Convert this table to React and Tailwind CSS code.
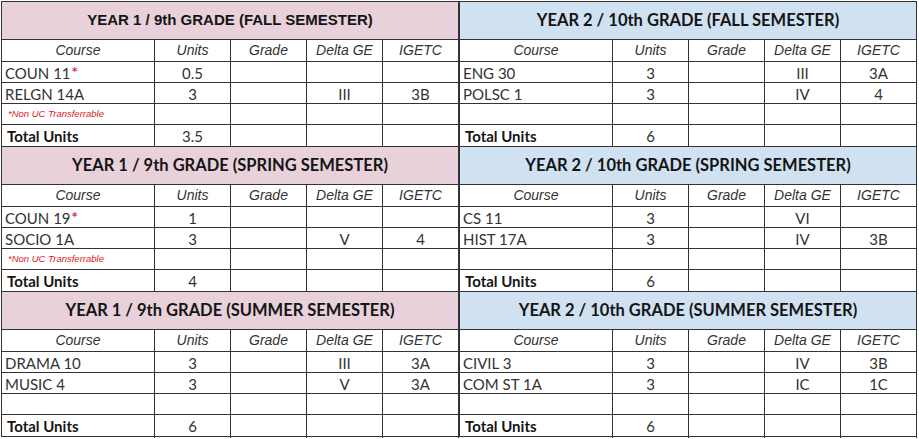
import React from 'react';

const cols = 'grid grid-cols-[153px_76px_76px_76px_76px]';

const sections = [
  [
    {
      title: 'YEAR 1 / 9th GRADE (FALL SEMESTER)',
      arial: true,
      tone: 'pink',
      rows: [
        ['COUN 11', '0.5', '', '', '', true],
        ['RELGN 14A', '3', '', 'III', '3B'],
      ],
      note: true,
      total: '3.5',
    },
    {
      title: 'YEAR 2 / 10th GRADE (FALL SEMESTER)',
      tone: 'blue',
      rows: [
        ['ENG 30', '3', '', 'III', '3A'],
        ['POLSC 1', '3', '', 'IV', '4'],
      ],
      total: '6',
    },
  ],
  [
    {
      title: 'YEAR 1 / 9th GRADE (SPRING SEMESTER)',
      tone: 'pink',
      rows: [
        ['COUN 19', '1', '', '', '', true],
        ['SOCIO 1A', '3', '', 'V', '4'],
      ],
      note: true,
      total: '4',
    },
    {
      title: 'YEAR 2 / 10th GRADE (SPRING SEMESTER)',
      tone: 'blue',
      rows: [
        ['CS 11', '3', '', 'VI', ''],
        ['HIST 17A', '3', '', 'IV', '3B'],
      ],
      total: '6',
    },
  ],
  [
    {
      title: 'YEAR 1 / 9th GRADE (SUMMER SEMESTER)',
      tone: 'pink',
      rows: [
        ['DRAMA 10', '3', '', 'III', '3A'],
        ['MUSIC 4', '3', '', 'V', '3A'],
      ],
      total: '6',
    },
    {
      title: 'YEAR 2 / 10th GRADE (SUMMER SEMESTER)',
      tone: 'blue',
      rows: [
        ['CIVIL 3', '3', '', 'IV', '3B'],
        ['COM ST 1A', '3', '', 'IC', '1C'],
      ],
      total: '6',
    },
  ],
];

const cell = 'border-r border-[#333] flex items-center';

function Semester({ data, first }) {
  const bg = data.tone === 'pink' ? 'bg-[#e8d1da]' : 'bg-[#d0e2f2]';
  return (
    <div className={`border-l border-[#333] ${first ? 'border-t' : ''}`}>
      <div
        className={`h-[38px] border-b border-r border-[#333] flex items-center justify-center ${bg} text-[#151515] font-bold ${
          data.arial ? "font-['Liberation_Sans',Arial,sans-serif] text-[15px]" : "font-['Lato',sans-serif] text-[16.5px]"
        }`}
      >
        {data.title}
      </div>

      <div className={`${cols} h-[22px] border-b border-[#333] italic text-[14px] text-[#333] font-['Liberation_Sans',Arial,sans-serif]`}>
        {['Course', 'Units', 'Grade', 'Delta GE', 'IGETC'].map((h) => (
          <div key={h} className={`${cell} justify-center`}>{h}</div>
        ))}
      </div>

      {data.rows.map((r) => (
        <div key={r[0]} className={`${cols} h-[21px] border-b border-[#333] text-[15px] text-[#333] font-['Lato',sans-serif]`}>
          <div className={`${cell} pl-[3px]`}>
            {r[0]}
            {r[5] && <span className="text-[#e0303a] font-bold ml-[1px] -mt-[3px]">*</span>}
          </div>
          {r.slice(1, 5).map((v, i) => (
            <div key={i} className={`${cell} justify-center`}>{v}</div>
          ))}
        </div>
      ))}

      <div className={`${cols} h-[21px] border-b border-[#333]`}>
        <div className={`${cell} pl-[6px] text-[9.5px] italic text-[#e0202a] font-['Liberation_Sans',Arial,sans-serif]`}>
          {data.note ? '*Non UC Transferrable' : ''}
        </div>
        <div className={cell}></div>
        <div className={cell}></div>
        <div className={cell}></div>
        <div className={cell}></div>
      </div>

      <div className={`${cols} h-[22px] border-b border-[#333] text-[15px] font-['Lato',sans-serif]`}>
        <div className={`${cell} pl-[5px] font-bold text-[#151515]`}>Total Units</div>
        <div className={`${cell} justify-center text-[#333]`}>{data.total}</div>
        <div className={cell}></div>
        <div className={cell}></div>
        <div className={cell}></div>
      </div>
    </div>
  );
}

export default function App() {
  return (
    <div className="w-[919px] h-[439px] bg-white pt-[1px] pl-[1px] overflow-hidden">
      {sections.map((pair, i) => (
        <div key={i} className="flex">
          {pair.map((s) => (
            <Semester key={s.title} data={s} first={i === 0} />
          ))}
        </div>
      ))}
    </div>
  );
}
